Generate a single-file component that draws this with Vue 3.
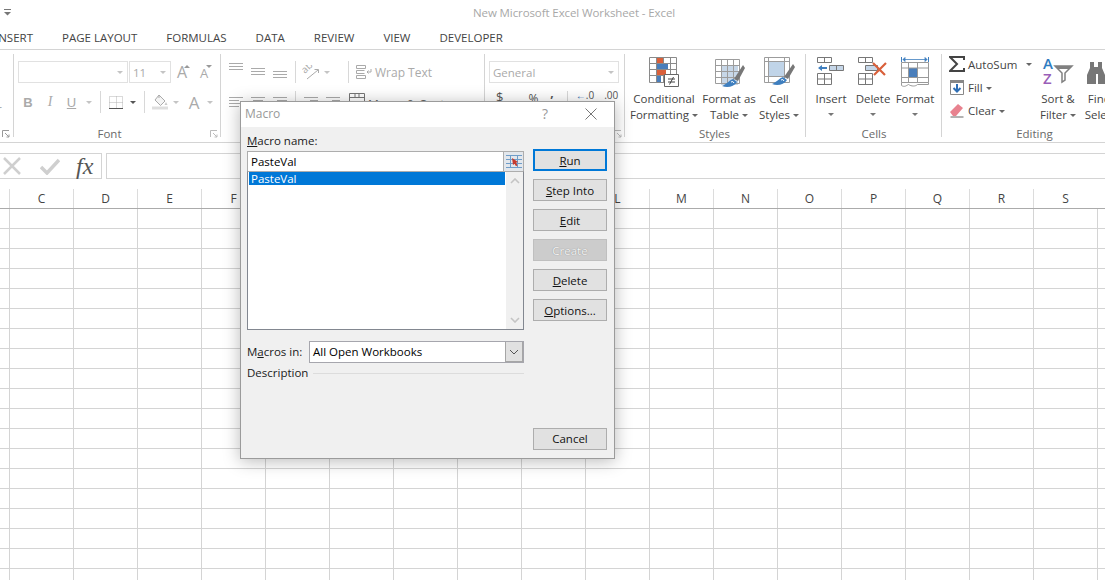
<template>
    <div class="excel">
        <!-- Title bar -->
        <div class="titlebar">
            <svg class="qat" width="9" height="8" viewBox="0 0 9 8"><path d="M1 1.500h7" stroke="#777"/><path d="M1 4h7l-3.500 3.500z" fill="#777"/></svg>
            <span class="title">New Microsoft Excel Worksheet - Excel</span>
        </div>

        <!-- Tabs -->
        <div class="tabs">
            <span v-for="tab in tabs" :key="tab" class="tab">{{ tab }}</span>
        </div>

        <!-- Ribbon -->
        <div class="ribbon">
            <div class="group g-clip">
                <span class="clip-r">r</span>
                <svg class="launcher launcher-left" width="8" height="8" viewBox="0 0 8 8"><path d="M.5 7V.5H7M3 3l4 4M4.500 7H7V4.500" fill="none" stroke="#999"/></svg>
            </div>

            <!-- Font -->
            <div class="group g-font">
                <div class="row row-top">
                    <div class="box font-box"><i class="caret pale"></i></div>
                    <div class="box size-box"><span>11</span><i class="caret pale"></i></div>
                    <div class="cell w22 grow-a"><span class="a-big">A</span><i class="tri-up"></i></div>
                    <div class="cell w22 grow-a"><span class="a-small">A</span><i class="tri-down"></i></div>
                </div>
                <div class="row row-bottom">
                    <div class="cell w22 fmt"><b>B</b></div>
                    <div class="cell w22 fmt"><i class="serif-i">I</i></div>
                    <div class="cell w21 fmt"><u>U</u></div>
                    <div class="cell w14"><i class="caret pale"></i></div>
                    <div class="cell w9"><i class="vsep"></i></div>
                    <div class="cell w22">
                        <svg width="14" height="13" viewBox="0 0 14 13"><path d="M.5.500h13v12H.5zM7.500 .5v12M.5 6.500h13" fill="none" stroke="#b5b5b5" stroke-dasharray="1 1"/><path d="M0 12.500h14" stroke="#555"/></svg>
                    </div>
                    <div class="cell w12"><i class="caret dark"></i></div>
                    <div class="cell w10"><i class="vsep"></i></div>
                    <div class="cell w22">
                        <svg width="17" height="16" viewBox="0 0 17 16"><path d="M7 1l6 6-4.500 4.500-5.500-5.500z" fill="#f4f4f4" stroke="#aaa"/><path d="M7 1v3" stroke="#aaa"/><path d="M14 8l1.500 3h-3z" fill="#c9c9c9"/><path d="M0 12.500h16v3H0z" fill="#dedede"/></svg>
                    </div>
                    <div class="cell w10"><i class="caret pale"></i></div>
                    <div class="cell w26 a-color">A</div>
                    <div class="cell w6"><i class="caret pale"></i></div>
                </div>
                <span class="group-label font-label">Font</span>
                <svg class="launcher" width="8" height="8" viewBox="0 0 8 8"><path d="M.5 7V.5H7M3 3l4 4M4.500 7H7V4.500" fill="none" stroke="#bbb"/></svg>
            </div>

            <!-- Alignment, mostly behind the dialog -->
            <div class="group g-align">
                <div class="row row-top">
                    <div class="cell w22 lines-top"><svg width="14" height="9" viewBox="0 0 14 9"><path d="M0 .5h14M0 3.500h14M0 6.500h14" stroke="#aaa"/></svg></div>
                    <div class="cell w22 lines-mid"><svg width="14" height="9" viewBox="0 0 14 9"><path d="M0 .5h14M0 3.500h14M0 6.500h14" stroke="#aaa"/></svg></div>
                    <div class="cell w22 lines-bot"><svg width="14" height="9" viewBox="0 0 14 9"><path d="M0 .5h14M0 3.500h14M0 6.500h14" stroke="#aaa"/></svg></div>
                    <div class="cell w9"><i class="vsep"></i></div>
                    <div class="cell w22">
                        <svg width="18" height="15" viewBox="0 0 18 15">
                            <text class="orient-text" transform="translate(3 9) rotate(-45)">ab</text>
                            <path d="M5 14L16 5M12.500 4.500H16.500V8" fill="none" stroke="#aaa"/>
                        </svg>
                    </div>
                    <div class="cell w10"><i class="caret pale"></i></div>
                    <i class="vsep wrap-sep"></i>
                    <svg width="16" height="14" viewBox="0 0 16 14"><path d="M.5.500h9v3h-9zM.5 5.500h8M.5 5.500v3h8M.5 10.500h9v3h-9zM15 4v3h-4m1.500-1.500L11 7l1.500 1.500" fill="none" stroke="#aaa"/></svg>
                    <span class="wrap-text">Wrap Text</span>
                </div>
                <div class="row row-bottom">
                    <div class="cell w22"><svg width="14" height="10" viewBox="0 0 14 10"><path d="M0 .5h14M0 3.500h10M0 6.500h14M0 9.500h10" stroke="#aaa"/></svg></div>
                    <div class="cell w22"><svg width="14" height="10" viewBox="0 0 14 10"><path d="M0 .5h14M2 3.500h10M0 6.500h14M2 9.500h10" stroke="#aaa"/></svg></div>
                    <div class="cell w22"><svg width="14" height="10" viewBox="0 0 14 10"><path d="M0 .5h14M4 3.500h10M0 6.500h14M4 9.500h10" stroke="#aaa"/></svg></div>
                    <div class="cell w9"><i class="vsep"></i></div>
                    <div class="cell w22"><svg width="14" height="10" viewBox="0 0 14 10"><path d="M0 .5h14M6 3.500h8M6 6.500h8M0 9.500h14" stroke="#aaa"/></svg></div>
                    <div class="cell w22 merge-gap"><svg width="14" height="10" viewBox="0 0 14 10"><path d="M0 .5h14M6 3.500h8M6 6.500h8M0 9.500h14" stroke="#aaa"/></svg></div>
                    <svg class="merge-icon" width="16" height="14" viewBox="0 0 16 14"><path d="M.5.500h15v13H.5zM.5 4.500h15M6 .5v4M10 .5v4" fill="none" stroke="#777"/></svg>
                    <span class="wrap-text merge-text">Merge &amp; Center</span>
                </div>
            </div>

            <!-- Number -->
            <div class="group g-number">
                <div class="row row-top">
                    <div class="box general-box"><span>General</span><i class="caret pale"></i></div>
                </div>
                <div class="row row-bottom num-row">
                    <span class="num num-dollar">$</span>
                    <span class="num num-percent">%</span>
                    <span class="num num-comma">,</span>
                    <i class="vsep num-sep"></i>
                    <span class="num num-dec"><em>←</em>.0</span>
                    <span class="num num-dec2">.00</span>
                </div>
                <svg class="launcher" width="8" height="8" viewBox="0 0 8 8"><path d="M.5 7V.5H7M3 3l4 4M4.500 7H7V4.500" fill="none" stroke="#bbb"/></svg>
            </div>

            <!-- Styles -->
            <div class="group g-styles">
                <div class="big-row">
                    <div class="big w72">
                        <svg class="big-icon" width="31" height="31" viewBox="0 0 31 31">
                            <path d="M.5.500h27v25H.5zM7.500.5v25M14.500.5v25M21.500.5v25M.5 6.500h27M.5 12.500h27M.5 18.500h27" fill="none" stroke="#8a8a8a"/>
                            <path d="M8 1h6v5H8zM8 13h9v5H8z" fill="#d9603b"/>
                            <path d="M8 7h11v5H8zM8 19h4v6H8z" fill="#4a7ebb"/>
                            <path d="M15.500 17.500h14v12h-14z" fill="#fff" stroke="#666"/>
                            <path d="M19 22h7M19 25h7M24.500 20l-4 7.500" fill="none" stroke="#444"/>
                        </svg>
                        <span>Conditional</span>
                        <span>Formatting<i class="caret"></i></span>
                    </div>
                    <div class="big w58">
                        <svg class="big-icon" width="31" height="31" viewBox="0 0 31 31">
                            <path d="M7 8h17v20H7z" fill="#c7d7e8"/>
                            <path d="M1.500 2.500h24v24h-24zM7.500 2.500v24M13.500 2.500v24M19.500 2.500v24M1.500 8.500h24M1.500 14.500h24M1.500 20.500h24" fill="none" stroke="#9c9c9c"/>
                            <path d="M29 8l-9 14 4 2 7-13z" fill="#777"/>
                            <path d="M19 22c-3 1-5 4-11 7 5 2 12 1 15-4z" fill="#3f7fbf"/>
                            <path d="M17 25a2 2 0 0 1 3 1" fill="none" stroke="#fff"/>
                        </svg>
                        <span>Format as</span>
                        <span>Table<i class="caret"></i></span>
                    </div>
                    <div class="big w42">
                        <svg class="big-icon" width="31" height="31" viewBox="0 0 31 31">
                            <path d="M5 5h15v14H5z" fill="#c0d4e8"/>
                            <path d="M.5.500h25v25H.5zM.5 4.500h25M.5 19.500h25M4.500.5v25M20.500.5v25" fill="none" stroke="#9c9c9c"/>
                            <path d="M29 7l-9 13 4 2 7-12z" fill="#777"/>
                            <path d="M19 20c-3 1-5 4-11 7 5 2 12 1 15-4z" fill="#3f7fbf"/>
                            <path d="M17 23a2 2 0 0 1 3 1" fill="none" stroke="#fff"/>
                        </svg>
                        <span>Cell</span>
                        <span>Styles<i class="caret"></i></span>
                    </div>
                </div>
                <span class="group-label styles-label">Styles</span>
            </div>

            <!-- Cells -->
            <div class="group g-cells">
                <div class="big-row">
                    <div class="big w42">
                        <svg class="big-icon" width="28" height="31" viewBox="0 0 28 31">
                            <path d="M.5.500h14v5H.5zM7.500.5v5M.5 16.500h14v11H.5zM.5 22h14M7.500 16.500v11" fill="none" stroke="#777"/>
                            <path d="M12.500 8.500h14v5h-14z" fill="#c5d6e8" stroke="#777"/>
                            <path d="M19.500 8.500v5" stroke="#777"/>
                            <path d="M1 11l4-3v2h5v2H5v2z" fill="#3f7fbf"/>
                        </svg>
                        <span>Insert</span>
                        <i class="caret under"></i>
                    </div>
                    <div class="big w42">
                        <svg class="big-icon" width="31" height="31" viewBox="0 0 31 31">
                            <path d="M.5.500h14v5H.5zM7.500.5v5M.5 16.500h14v11H.5zM.5 22h14M7.500 16.500v11" fill="none" stroke="#777"/>
                            <path d="M7.500 8.500h12v5h-12z" fill="#c5d6e8" stroke="#777"/>
                            <path d="M15 6l12 12M28 6L16 18" stroke="#d9603b" stroke-width="2.200"/>
                        </svg>
                        <span>Delete</span>
                        <i class="caret under"></i>
                    </div>
                    <div class="big w42">
                        <svg class="big-icon" width="29" height="31" viewBox="0 0 29 31">
                            <path d="M.5 0v5M27.500 0v5" stroke="#3f7fbf"/>
                            <path d="M2 2.500h24M2 2.500l2-2v4zM26 2.500l-2-2v4z" fill="#3f7fbf" stroke="#3f7fbf" stroke-width=".8"/>
                            <path d="M7 11h9v9H7z" fill="#4a7ebb"/>
                            <path d="M.5 5.500h27v20H.5zM7.500 5.500v20M16.500 5.500v20M.5 11h27M.5 20.500h27" fill="none" stroke="#999"/>
                            <path d="M.5 25.500v3c3 2 5 0 7-1 3 2 7 2 9 0h11v-2" fill="none" stroke="#999"/>
                        </svg>
                        <span>Format</span>
                        <i class="caret under"></i>
                    </div>
                </div>
                <span class="group-label">Cells</span>
            </div>

            <!-- Editing -->
            <div class="group g-editing">
                <div class="big-row">
                    <div class="small-col">
                        <div class="small-row">
                            <svg width="16" height="16" viewBox="0 0 16 16"><path d="M15 4V1H1l7 7-7 7h14v-3" fill="none" stroke="#444" stroke-width="2"/></svg>
                            <span class="small-text">AutoSum</span>
                            <i class="caret sum-caret"></i>
                        </div>
                        <div class="small-row">
                            <svg width="16" height="16" viewBox="0 0 16 16"><path d="M1.500 1.500h13v14h-13z" fill="#fff" stroke="#888"/><path d="M1 1h14v3H1z" fill="#888"/><path d="M8 5v7M4.500 9L8 12.500 11.500 9" fill="none" stroke="#2f6fb5" stroke-width="2"/></svg>
                            <span class="small-text">Fill<i class="caret"></i></span>
                        </div>
                        <div class="small-row">
                            <svg width="16" height="16" viewBox="0 0 16 16"><path d="M1 10l8-8 5 4-7 8H4z" fill="#e8828f"/><path d="M1.500 15h13" stroke="#666"/></svg>
                            <span class="small-text">Clear<i class="caret"></i></span>
                        </div>
                    </div>
                    <div class="big w42">
                        <svg class="big-icon sort-icon" width="30" height="31" viewBox="0 0 30 31">
                            <text x="0" y="12" class="sort-a">A</text>
                            <text x="0" y="27" class="sort-z">Z</text>
                            <path d="M12 9h17l-7 7v7l-3 2v-9z" fill="#fff" stroke="#808080" stroke-width="1.500"/>
                            <path d="M12 9h17l-3 3H15z" fill="#808080"/>
                        </svg>
                        <span>Sort &amp;</span>
                        <span>Filter<i class="caret"></i></span>
                    </div>
                    <div class="big w52">
                        <svg class="big-icon find-icon" width="20" height="31" viewBox="0 0 20 31">
                            <path d="M3 5h4v5h4V5h4v6l3 7v9h-7V17H9v10H0v-9l3-7z" fill="#777"/>
                        </svg>
                        <span>Find &amp;</span>
                        <span>Select<i class="caret"></i></span>
                    </div>
                </div>
                <span class="group-label editing-label">Editing</span>
            </div>
        </div>

        <!-- Formula bar -->
        <div class="formula-bar">
            <div class="fx-box">
                <svg width="18" height="18" viewBox="0 0 18 18"><path d="M1 1l16 16M17 1L1 17" stroke="#cfcfcf" stroke-width="2.500"/></svg>
                <svg class="check" width="20" height="17" viewBox="0 0 20 17"><path d="M1 9l6 6L19 2" fill="none" stroke="#cfcfcf" stroke-width="3.500"/></svg>
                <span class="fx">fx</span>
            </div>
            <div class="formula-input"></div>
        </div>

        <!-- Column headers and grid -->
        <div class="col-headers">
            <span v-for="col in columns" :key="col" class="col">{{ col }}</span>
        </div>
        <div class="sheet"></div>

        <!-- Macro dialog -->
        <div class="dialog">
            <div class="dialog-title">
                <span class="dialog-name">Macro</span>
                <span class="help">?</span>
                <svg class="close" width="12" height="12" viewBox="0 0 12 12"><path d="M.5.500l11 11M11.500.5l-11 11" stroke="#777"/></svg>
            </div>
            <div class="dialog-body">
                <div class="left-col">
                    <label class="name-label"><u>M</u>acro name:</label>
                    <div class="name-input">
                        <span class="name-value">PasteVal</span>
                        <div class="ref-btn">
                            <svg width="16" height="13" viewBox="0 0 16 13">
                                <path d="M0 .5h16M0 4.500h16M0 8.500h16M0 12.500h16M4.500 0v13M11.500 0v13" stroke="#6f9dc9"/>
                                <path d="M6 3l6 4-2 .8 1.500 2.400-1.500 1-1.500-2.500-1.500 1.300z" fill="#c8392b"/>
                            </svg>
                        </div>
                    </div>
                    <div class="macro-list">
                        <div class="list-items">
                            <div class="list-item">PasteVal</div>
                        </div>
                        <div class="list-scroll">
                            <svg width="10" height="6" viewBox="0 0 10 6"><path d="M1 5l4-4 4 4" fill="none" stroke="#c4c4c4" stroke-width="1.600"/></svg>
                            <svg width="10" height="6" viewBox="0 0 10 6"><path d="M1 1l4 4 4-4" fill="none" stroke="#c4c4c4" stroke-width="1.600"/></svg>
                        </div>
                    </div>
                    <div class="macros-in">
                        <label class="in-label">M<u>a</u>cros in:</label>
                        <div class="combo">
                            <span class="combo-value">All Open Workbooks</span>
                            <div class="combo-btn">
                                <svg width="10" height="6" viewBox="0 0 10 6"><path d="M1 1l4 4 4-4" fill="none" stroke="#555"/></svg>
                            </div>
                        </div>
                    </div>
                    <div class="description">
                        <span>Description</span>
                        <i class="desc-line"></i>
                    </div>
                </div>
                <div class="right-col">
                    <button class="btn primary"><u>R</u>un</button>
                    <button class="btn"><u>S</u>tep Into</button>
                    <button class="btn"><u>E</u>dit</button>
                    <button class="btn disabled">Create</button>
                    <button class="btn"><u>D</u>elete</button>
                    <button class="btn"><u>O</u>ptions...</button>
                    <button class="btn cancel">Cancel</button>
                </div>
            </div>
        </div>
    </div>
</template>

<script setup>
const tabs = ['INSERT', 'PAGE LAYOUT', 'FORMULAS', 'DATA', 'REVIEW', 'VIEW', 'DEVELOPER']

// Columns scrolled so that C is the first one on screen
const columns = 'CDEFGHIJKLMNOPQRS'.split('')
</script>

<style>
html, body {
    margin: 0;
    background: #fff;
}
</style>

<style scoped>
.excel {
    position: relative;
    width: 1105px;
    height: 580px;
    overflow: hidden;
    background: #fff;
    display: flex;
    flex-direction: column;
    font-family: "Open Sans", "Noto Sans", sans-serif;
    font-size: 11.5px;
    color: #444;
}

.titlebar {
    height: 28px;
    flex: none;
    display: flex;
    align-items: flex-start;
}

.qat {
    margin: 8px 0 0 3px;
}

.title {
    margin: 5px 0 0 461px;
    line-height: 16px;
    color: #a8a8a8;
    letter-spacing: -0.1px;
}

.tabs {
    height: 21px;
    flex: none;
    display: flex;
    gap: 29px;
    margin-left: -5px;
    border-bottom: 1px solid #d4d4d4;
    line-height: 19px;
    white-space: nowrap;
}

.ribbon {
    height: 93px;
    flex: none;
    box-sizing: border-box;
    padding-top: 4px;
    display: flex;
    border-bottom: 1px solid #d4d4d4;
    overflow: hidden;
}

.group {
    position: relative;
    flex: none;
    box-sizing: border-box;
    height: 87px;
    background: linear-gradient(#d4d4d4, #d4d4d4) right top / 1px 83px no-repeat;
    white-space: nowrap;
}

.g-clip { width: 14px; }
.g-font { width: 207px; padding-left: 3px; }
.g-align { width: 264px; padding-left: 4px; }
.g-number { width: 140px; padding-left: 4px; }
.g-styles { width: 181px; padding-left: 3px; }
.g-cells { width: 136px; padding-left: 4px; }
.g-editing { width: 163px; padding-left: 7px; background: none; }

.clip-r {
    position: absolute;
    left: -3px;
    top: 47px;
    color: #999;
}

.launcher {
    position: absolute;
    right: 3px;
    bottom: 3px;
}

.launcher-left {
    right: auto;
    left: 2px;
}

.row {
    display: flex;
    align-items: center;
    height: 22px;
}

.row-top {
    margin-top: 7px;
}

.g-font .row-top {
    margin-left: 1px;
}

.row-bottom {
    margin-top: 8px;
}

.cell {
    flex: none;
    height: 22px;
    display: flex;
    align-items: center;
    justify-content: center;
    position: relative;
}

.w6 { width: 6px; }
.w9 { width: 9px; }
.w10 { width: 10px; }
.w12 { width: 12px; }
.w14 { width: 14px; }
.w21 { width: 21px; }
.w22 { width: 22px; }
.w26 { width: 26px; }
.w42 { width: 42px; }
.w52 { width: 52px; }
.w58 { width: 58px; }
.w72 { width: 72px; }

.caret {
    display: inline-block;
    flex: none;
    width: 0;
    height: 0;
    margin-left: 3px;
    border-left: 3px solid transparent;
    border-right: 3px solid transparent;
    border-top: 3px solid #666;
    vertical-align: middle;
}

.caret.pale { border-top-color: #c4c4c4; margin-left: 0; }
.caret.dark { border-top-color: #555; margin-left: 0; }

.vsep {
    display: block;
    flex: none;
    width: 1px;
    height: 22px;
    background: #d8d8d8;
}

.box {
    box-sizing: border-box;
    height: 22px;
    flex: none;
    display: flex;
    align-items: center;
    justify-content: space-between;
    padding: 0 4px 0 3px;
    border: 1px solid #e1e1e1;
    color: #aaa;
}

.font-box {
    width: 110px;
    margin-right: 1px;
    justify-content: flex-end;
}

.size-box { width: 42px; }
.general-box { width: 130px; }

.a-big { font-size: 16px; color: #aaa; }
.a-small { font-size: 13px; color: #aaa; margin-top: 2px; }

.tri-up, .tri-down {
    position: absolute;
    top: 4px;
    right: 3px;
    width: 0;
    height: 0;
    border-left: 3px solid transparent;
    border-right: 3px solid transparent;
}

.tri-up { border-bottom: 3px solid #999; }
.tri-down { border-top: 3px solid #999; }

.fmt {
    color: #aaa;
    font-size: 13px;
    font-family: "Liberation Sans", Arial, sans-serif;
}

.serif-i {
    font-family: "Liberation Serif", serif;
    font-style: italic;
    font-size: 14px;
}

.a-color {
    font-size: 17px;
    color: #aaa;
}

.group-label {
    position: absolute;
    left: 0;
    right: 0;
    top: 73px;
    line-height: 14px;
    text-align: center;
    color: #6a6a6a;
}

.font-label { right: 16px; }
.styles-label { right: 2px; }
.editing-label { left: 22px; }

.lines-top svg { margin-top: -9px; }
.lines-bot svg { margin-top: 7px; }

.orient-text {
    font-size: 10px;
    fill: #aaa;
}

.wrap-sep {
    margin: 0 7px 0 16px;
}

.wrap-text {
    margin-left: 3px;
    color: #aaa;
    font-size: 12px;
}

.merge-gap {
    margin-right: 5px;
}

.merge-icon {
    margin-top: -5px;
}

.merge-text {
    color: #666;
    margin-top: 4px;
}

.num-row {
    align-items: flex-start;
    color: #555;
}

.num {
    line-height: 22px;
    font-size: 12px;
}

.num-dollar { margin-left: 7px; font-size: 13px; margin-top: -5px; }
.num-percent { margin-left: 25px; margin-top: -3px; }
.num-comma { margin-left: 12px; font-weight: 700; margin-top: -9px; }
.num-sep { margin-left: 13px; }
.num-dec { margin-left: 8px; font-size: 10px; margin-top: -7px; }
.num-dec em { color: #2f6fb5; font-style: normal; font-weight: 700; }
.num-dec2 { margin-left: 10px; font-size: 10px; margin-top: -7px; }

.big-row {
    display: flex;
}

.big {
    flex: none;
    display: flex;
    flex-direction: column;
    align-items: center;
    line-height: 16px;
    padding-top: 3px;
    color: #444;
    white-space: nowrap;
}

.big-icon {
    margin-bottom: 3px;
    flex: none;
}

.big .caret.under {
    margin: 6px 0 0;
    border-top-color: #777;
}

.small-col {
    width: 88px;
    flex: none;
    margin-top: -1.500px;
}

.small-row {
    height: 23px;
    display: flex;
    align-items: center;
}

.small-text {
    margin-left: 3px;
}

.sum-caret {
    margin-left: 9px;
}

.sort-icon {
    overflow: visible;
}

.find-icon {
    margin-right: 16px;
}

.sort-a, .sort-z {
    font-family: "Open Sans", sans-serif;
    font-size: 15px;
    font-weight: 600;
}

.sort-a { fill: #2f7cc1; }
.sort-z { fill: #9a5fb8; }

.formula-bar {
    flex: none;
    height: 26px;
    margin-top: 10px;
    display: flex;
    gap: 4px;
}

.fx-box {
    box-sizing: border-box;
    width: 103px;
    margin-left: -1px;
    display: flex;
    align-items: center;
    padding-left: 4px;
    border: 1px solid #d4d4d4;
    border-left: none;
}

.check {
    margin-left: 19px;
}

.fx {
    margin-left: 16px;
    font-family: "Liberation Serif", serif;
    font-style: italic;
    font-size: 24px;
    color: #555;
}

.formula-input {
    flex: 1;
    box-sizing: border-box;
    border: 1px solid #d4d4d4;
    border-right: none;
}

.col-headers {
    flex: none;
    box-sizing: border-box;
    height: 20px;
    margin-top: 10px;
    padding-left: 9px;
    display: flex;
    border-bottom: 1px solid #ababab;
}

.col {
    flex: none;
    box-sizing: border-box;
    width: 64px;
    line-height: 19px;
    text-align: center;
    border-left: 1px solid #dcdcdc;
    color: #444;
    font-size: 12px;
}

.sheet {
    flex: 1;
    background-image:
        linear-gradient(to right, #d4d4d4 1px, transparent 1px),
        linear-gradient(to bottom, #d4d4d4 1px, transparent 1px);
    background-size: 64px 100%, 100% 20px;
    background-position: 9px 0, 0 19px;
}

/* Dialog floats over the sheet */
.dialog {
    position: absolute;
    left: 240px;
    top: 101px;
    box-sizing: border-box;
    width: 375px;
    height: 358px;
    display: flex;
    flex-direction: column;
    background: #f0f0f0;
    border: 1px solid #9b9b9b;
    box-shadow: 0 2px 16px rgba(0, 0, 0, 0.28);
    color: #1a1a1a;
}

.dialog-title {
    flex: none;
    box-sizing: border-box;
    height: 25px;
    display: flex;
    align-items: center;
    background: #fff;
    padding: 0 17px 2px 4px;
}

.dialog-name {
    color: #999;
    font-size: 12px;
}

.help {
    margin-left: auto;
    margin-right: 37px;
    color: #999;
    font-size: 14px;
}

.dialog-body {
    flex: 1;
    display: flex;
    gap: 9px;
    padding: 0 7px 8px 6px;
}

.left-col {
    width: 277px;
    flex: none;
}

.name-label {
    display: block;
    margin-top: 7px;
    line-height: 14px;
}

.name-input {
    box-sizing: border-box;
    height: 20px;
    margin-top: 3px;
    display: flex;
    align-items: center;
    background: #fff;
    border: 1px solid #adadad;
    border-bottom: none;
}

.name-value {
    margin-left: 3px;
    flex: 1;
    color: #000;
}

.ref-btn {
    box-sizing: border-box;
    width: 20px;
    height: 19px;
    display: flex;
    align-items: center;
    justify-content: center;
    background: #e3e7ec;
    border-left: 1px solid #adadad;
}

.macro-list {
    box-sizing: border-box;
    height: 159px;
    display: flex;
    background: #fff;
    border: 1px solid #828790;
    border-top: 1px solid #adadad;
}

.list-items {
    flex: 1;
    padding: 0 1px;
}

.list-item {
    height: 13px;
    line-height: 13px;
    padding-left: 2px;
    background: #0078d7;
    color: #fff;
}

.list-scroll {
    width: 17px;
    flex: none;
    background: #f0f0f0;
    display: flex;
    flex-direction: column;
    align-items: center;
    justify-content: space-between;
    padding: 6px 0;
    box-sizing: border-box;
}

.macros-in {
    display: flex;
    align-items: center;
    margin-top: 11px;
}

.in-label {
    width: 62px;
    flex: none;
    margin-top: -2px;
}

.combo {
    flex: 1;
    box-sizing: border-box;
    height: 22px;
    display: flex;
    align-items: center;
    background: #fff;
    border: 1px solid #a6a6ad;
}

.combo-value {
    flex: 1;
    margin: -2px 0 0 3px;
    color: #000;
}

.combo-btn {
    box-sizing: border-box;
    width: 18px;
    height: 20px;
    display: flex;
    align-items: center;
    justify-content: center;
    background: #e1e1e1;
    border: 1px solid #a6a6a6;
    border-width: 0 1px 1px 1px;
}

.description {
    display: flex;
    align-items: center;
    gap: 5px;
    margin-top: 3px;
    line-height: 14px;
}

.desc-line {
    flex: 1;
    height: 1px;
    background: #dcdcdc;
}

.right-col {
    width: 74px;
    flex: none;
    display: flex;
    flex-direction: column;
    gap: 8px;
    padding-top: 22px;
}

.btn {
    box-sizing: border-box;
    height: 22px;
    padding: 0;
    font: inherit;
    color: #111;
    background: #e1e1e1;
    border: 1px solid #adadad;
}

.btn.primary {
    border: 2px solid #0078d7;
}

.btn.disabled {
    background: #cccccc;
    border-color: #bfbfbf;
    color: #f4f4f4;
    text-shadow: 0 0 1px #777;
}

.btn.cancel {
    margin-top: auto;
    padding-bottom: 2px;
}
</style>
